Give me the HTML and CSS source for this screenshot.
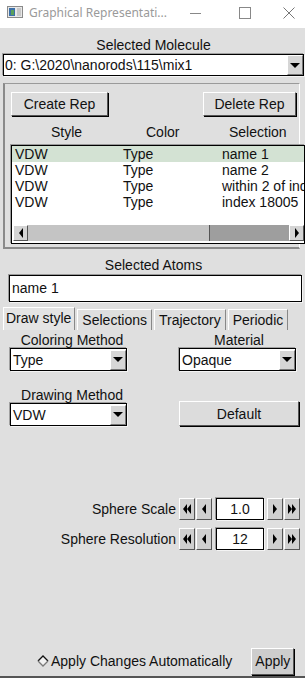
FILE: index.html
```html
<!DOCTYPE html>
<html>
<head>
<meta charset="utf-8">
<link rel="stylesheet" href="styles.css">
</head>
<body>
<div class="titlebar">
  <svg class="appicon" width="16" height="12" viewBox="0 0 16 12">
    <rect x="0.5" y="0.5" width="15" height="11" fill="#e8e8e8" stroke="#8a8a8a"/>
    <rect x="2" y="2" width="6" height="8" fill="#3b6fa8"/>
    <rect x="4" y="4" width="3" height="5" fill="#5aa05a"/>
    <rect x="10" y="2" width="4" height="8" fill="#c8c8c8"/>
  </svg>
  <span class="title">Graphical Representati...</span>
  <span class="wctl wmin"></span>
  <span class="wctl wmax"></span>
  <svg class="wctl wclose" width="12" height="12" viewBox="0 0 12 12"><path d="M0.5 0.5 L11.5 11.5 M11.5 0.5 L0.5 11.5" stroke="#777" stroke-width="1"/></svg>
</div>
<div class="main">
  <div class="label">Selected Molecule</div>
  <div class="combo combo-wide"><span class="ctext">0: G:\2020\nanorods\115\mix1</span><span class="arrowbtn"><i class="tri-down"></i></span></div>

  <div class="frame">
    <div class="btnrow">
      <span class="btn btn-create">Create Rep</span>
      <span class="btn btn-delete">Delete Rep</span>
    </div>
    <div class="heads"><span class="h1">Style</span><span class="h2">Color</span><span class="h3">Selection</span></div>
    <div class="list">
      <div class="rows">
        <div class="row sel"><span class="c1">VDW</span><span class="c2">Type</span><span class="c3">name 1</span></div>
        <div class="row"><span class="c1">VDW</span><span class="c2">Type</span><span class="c3">name 2</span></div>
        <div class="row"><span class="c1">VDW</span><span class="c2">Type</span><span class="c3">within 2 of index</span></div>
        <div class="row"><span class="c1">VDW</span><span class="c2">Type</span><span class="c3">index 18005</span></div>
      </div>
      <div class="hscroll">
        <span class="sbtn"><i class="tri-left"></i></span>
        <span class="thumb"></span>
        <span class="trough"></span>
        <span class="sbtn"><i class="tri-right"></i></span>
      </div>
    </div>
  </div>

  <div class="label atoms-label">Selected Atoms</div>
  <div class="entry">name 1</div>

  <div class="tabs">
    <span class="tab active">Draw style</span>
    <span class="tab">Selections</span>
    <span class="tab">Trajectory</span>
    <span class="tab">Periodic</span>
  </div>

  <div class="panel">
    <div class="grid2">
      <div class="cell">
        <div class="label">Coloring Method</div>
        <div class="combo combo-small"><span class="ctext">Type</span><span class="arrowbtn"><i class="tri-down"></i></span></div>
      </div>
      <div class="cell">
        <div class="label">Material</div>
        <div class="combo combo-small"><span class="ctext">Opaque</span><span class="arrowbtn"><i class="tri-down"></i></span></div>
      </div>
      <div class="cell">
        <div class="label">Drawing Method</div>
        <div class="combo combo-small"><span class="ctext">VDW</span><span class="arrowbtn"><i class="tri-down"></i></span></div>
      </div>
      <div class="cell cell-bottom">
        <span class="btn btn-default">Default</span>
      </div>
    </div>

    <div class="spins">
      <div class="spinrow">
        <span class="slabel">Sphere Scale</span>
        <span class="sp"><i class="tri-left"></i><i class="tri-left"></i></span>
        <span class="sp"><i class="tri-left"></i></span>
        <span class="sval">1.0</span>
        <span class="sp"><i class="tri-right"></i></span>
        <span class="sp"><i class="tri-right"></i><i class="tri-right"></i></span>
      </div>
      <div class="spinrow">
        <span class="slabel">Sphere Resolution</span>
        <span class="sp"><i class="tri-left"></i><i class="tri-left"></i></span>
        <span class="sp"><i class="tri-left"></i></span>
        <span class="sval">12</span>
        <span class="sp"><i class="tri-right"></i></span>
        <span class="sp"><i class="tri-right"></i><i class="tri-right"></i></span>
      </div>
    </div>
  </div>

  <div class="footer">
    <svg class="diamond" width="12" height="12" viewBox="0 0 12 12">
      <path d="M6 1 L11 6 L6 11 L1 6 Z" fill="#f2f2f2"/>
      <path d="M1 6 L6 1 L11 6" fill="none" stroke="#111" stroke-width="1.3"/>
      <path d="M1 6 L6 11 L11 6" fill="none" stroke="#7a7a7a" stroke-width="1.3"/>
    </svg>
    <span class="autolabel">Apply Changes Automatically</span>
    <span class="btn btn-apply">Apply</span>
  </div>
</div>
<div class="bottomline"></div>
</body>
</html>
```

FILE: styles.css
```css
html, body {
  margin: 0;
  padding: 0;
}
body {
  width: 305px;
  height: 678px;
  overflow: hidden;
  background: #dfdfdf;
  font-family: "Liberation Sans", Arial, sans-serif;
  font-size: 14px;
  color: #111;
  position: relative;
}
.titlebar {
  height: 28px;
  background: #fff;
  display: flex;
  align-items: center;
  position: relative;
}
.appicon {
  margin-left: 7px;
  margin-top: -4px;
}
.title {
  margin-left: 6px;
  font-family: "Noto Sans", sans-serif;
  font-size: 12px;
  color: #9a9a9a;
  margin-top: -3px;
}
.wctl {
  position: absolute;
}
.wmin {
  left: 190px;
  top: 13px;
  width: 11px;
  height: 1px;
  background: #888;
}
.wmax {
  left: 239px;
  top: 7px;
  width: 10px;
  height: 10px;
  border: 1px solid #888;
}
.wclose {
  left: 283px;
  top: 7px;
}
.main {
  padding: 0 1px 0 3px;
}
.label {
  text-align: center;
  line-height: 16px;
  height: 16px;
}
.main > .label:first-child {
  margin-top: 9px;
}
.combo {
  display: flex;
  background: #fff;
  border: 1px solid #000;
  box-shadow: -1px -1px 0 #a0a0a0, 1px 1px 0 #f4f4f4;
  height: 20px;
  align-items: center;
}
.combo-wide {
  margin-top: 1px;
  width: 299px;
}
.ctext {
  flex: 1;
  padding-left: 1px;
  white-space: nowrap;
  overflow: hidden;
}
.arrowbtn {
  width: 14px;
  height: 18px;
  background: #d6d6d6;
  border-top: 1px solid #fff;
  border-left: 1px solid #fff;
  border-right: 1px solid #777;
  border-bottom: 1px solid #777;
  display: flex;
  align-items: center;
  justify-content: center;
}
.tri-down {
  width: 0;
  height: 0;
  border-left: 5px solid transparent;
  border-right: 5px solid transparent;
  border-top: 5px solid #000;
}
.tri-left {
  width: 0;
  height: 0;
  border-top: 5px solid transparent;
  border-bottom: 5px solid transparent;
  border-right: 4px solid #000;
}
.tri-right {
  width: 0;
  height: 0;
  border-top: 5px solid transparent;
  border-bottom: 5px solid transparent;
  border-left: 4px solid #000;
}
.frame {
  margin-top: 7px;
  width: 297px;
  height: 166px;
  border-top: 1px solid #9a9a9a;
  border-left: 2px solid #8a8a8a;
  border-right: 1px solid #fff;
  border-bottom: 2px solid #8a8a8a;
  box-sizing: border-box;
  padding: 8px 0 0 6px;
}
.btnrow {
  display: flex;
  justify-content: space-between;
  padding-right: 3px;
}
.btn {
  display: inline-flex;
  align-items: center;
  justify-content: center;
  background: #dcdcdc;
  border-top: 1px solid #fff;
  border-left: 1px solid #fff;
  border-right: 1px solid #555;
  border-bottom: 1px solid #555;
  box-shadow: 1px 1px 0 #000;
  box-sizing: border-box;
}
.btn-create {
  width: 97px;
  height: 24px;
}
.btn-delete {
  width: 93px;
  height: 24px;
}
.heads {
  display: flex;
  height: 16px;
  line-height: 16px;
  margin-top: 8px;
}
.h1 { margin-left: 40px; width: 95px; flex-shrink: 0; }
.h2 { width: 83px; flex-shrink: 0; }
.list {
  margin-top: 5px;
  width: 294px;
  height: 99px;
  background: #fff;
  border: 1px solid #000;
  box-shadow: -1px -1px 0 #9a9a9a;
  box-sizing: border-box;
  display: flex;
  flex-direction: column;
  overflow: hidden;
}
.rows {
  flex: 1;
}
.row {
  display: flex;
  height: 16px;
  line-height: 16px;
  white-space: nowrap;
}
.row.sel {
  background: #d3e2d3;
}
.c1 { width: 111px; padding-left: 3px; box-sizing: border-box; flex-shrink: 0; }
.c2 { width: 99px; flex-shrink: 0; }
.c3 { flex-shrink: 0; }
.hscroll {
  display: flex;
  height: 16px;
  margin-bottom: 2px;
  margin-left: 1px;
}
.sbtn {
  width: 15px;
  height: 16px;
  background: #d4d4d4;
  border-top: 1px solid #fff;
  border-left: 1px solid #fff;
  border-right: 1px solid #555;
  border-bottom: 1px solid #555;
  box-sizing: border-box;
  display: flex;
  align-items: center;
  justify-content: center;
}
.thumb {
  width: 181px;
  background: #c4c4c4;
  border-right: 1px solid #555;
}
.trough {
  flex: 1;
  background: #9e9e9e;
}
.atoms-label {
  margin-top: 8px;
}
.entry {
  margin-top: 2px;
  margin-left: 6px;
  width: 293px;
  height: 27px;
  background: #fff;
  border: 1px solid #000;
  box-shadow: -1px -1px 0 #9a9a9a, 1px 1px 0 #f4f4f4;
  box-sizing: border-box;
  line-height: 25px;
  padding-left: 2px;
}
.tabs {
  display: flex;
  margin-top: 5px;
  gap: 2px;
  align-items: flex-end;
}
.tab {
  height: 20px;
  line-height: 20px;
  padding: 0 4px;
  border-top: 1px solid #fff;
  border-left: 1px solid #fff;
  border-right: 1px solid #888;
}
.tab.active {
  height: 22px;
  background: #e4e4e4;
  padding: 0 3px 0 2px;
}
.panel {
  padding-top: 2px;
}
.grid2 {
  display: grid;
  grid-template-columns: 124px 120px;
  column-gap: 45px;
  row-gap: 16px;
  margin-left: 7px;
}
.combo-small {
  width: 115px;
  height: 21px;
}
.combo-small .ctext {
  padding-left: 2px;
}
.cell-bottom {
  display: flex;
  align-items: flex-end;
}
.btn-default {
  width: 120px;
  height: 25px;
}
.spins {
  margin-top: 72px;
  display: flex;
  flex-direction: column;
  gap: 8px;
}
.spinrow {
  display: flex;
  align-items: center;
  height: 22px;
  gap: 1px;
}
.slabel {
  width: 173px;
  text-align: right;
  margin-right: 2px;
}
.sp {
  width: 16px;
  height: 22px;
  background: #cfcfcf;
  border-top: 1px solid #fff;
  border-left: 1px solid #fff;
  border-right: 1px solid #555;
  border-bottom: 1px solid #555;
  box-sizing: border-box;
  display: flex;
  align-items: center;
  justify-content: center;
}
.sval {
  width: 48px;
  height: 22px;
  background: #fff;
  border: 1px solid #000;
  box-shadow: -1px -1px 0 #9a9a9a, 1px 1px 0 #f4f4f4;
  box-sizing: border-box;
  text-align: center;
  line-height: 20px;
  margin: 0 2px 0 3px;
}
.footer {
  position: absolute;
  left: 0;
  right: 0;
  top: 647px;
  display: flex;
  align-items: center;
  height: 28px;
}
.diamond {
  margin-left: 37px;
}
.autolabel {
  margin-left: 2px;
}
.btn-apply {
  margin-left: 19px;
  width: 43px;
  height: 27px;
  background: #cdcdcd;
}
.bottomline {
  position: absolute;
  left: 0;
  right: 0;
  bottom: 0;
  height: 2px;
  background: #555;
}
```
